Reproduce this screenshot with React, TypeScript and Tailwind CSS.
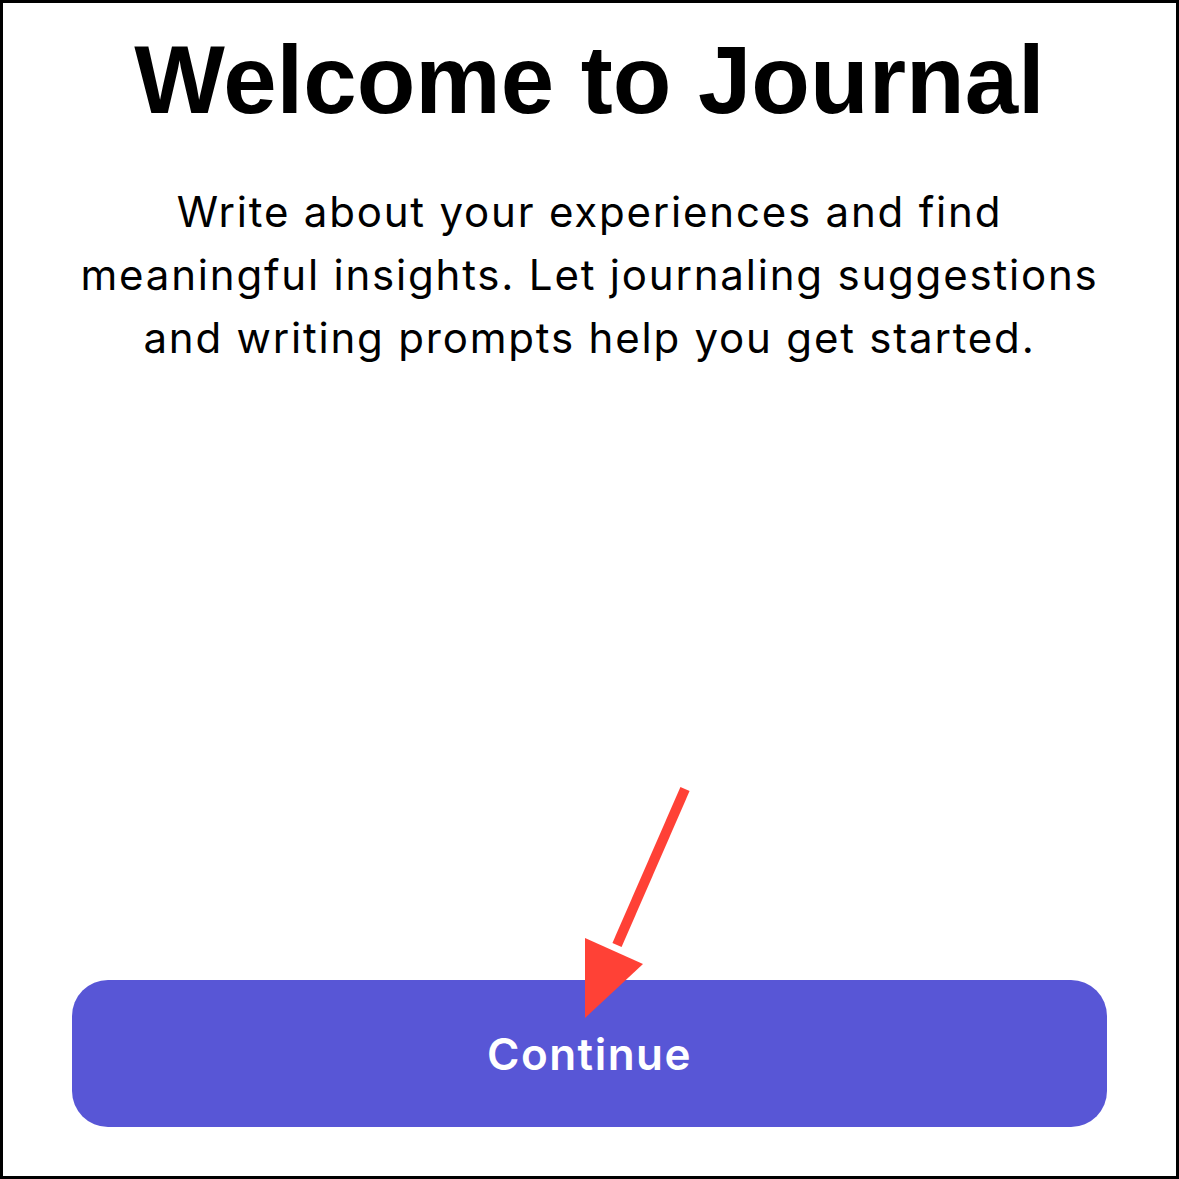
export default function App() {
  return (
    <div className="relative w-[1179px] h-[1179px] bg-white border-[3px] border-black flex flex-col items-center overflow-hidden">
      <h1
        className="mt-[29px] text-[96px] leading-[96px] font-bold text-black text-center"
        style={{ fontFamily: '"Liberation Sans", Arial, sans-serif' }}
      >
        Welcome to Journal
      </h1>
      <p
        className="mt-[52px] text-[42px] leading-[63px] tracking-[1.8px] text-black text-center"
        style={{ fontFamily: 'Inter, "Noto Sans", sans-serif' }}
      >
        Write about your experiences and find
        <br />
        meaningful insights. Let journaling suggestions
        <br />
        and writing prompts help you get started.
      </p>
      <div className="flex-1" />
      <div className="w-full px-[69px] pb-[49px]">
        <button
          className="w-full h-[147px] rounded-[36px] bg-[#5856D6] text-white text-[44px] tracking-[1.5px] font-semibold flex items-center justify-center"
          style={{ fontFamily: 'Inter, "Noto Sans", sans-serif' }}
        >
          Continue
        </button>
      </div>
      {/* red pointer arrow over the button */}
      <svg
        className="absolute left-[-3px] top-[-3px] pointer-events-none"
        width="1179"
        height="1179"
        viewBox="0 0 1179 1179"
      >
        <line x1="685" y1="789" x2="617" y2="945" stroke="#FF4136" strokeWidth="10" />
        <polygon points="585,938 643,964 585,1018" fill="#FF4136" />
      </svg>
    </div>
  );
}
